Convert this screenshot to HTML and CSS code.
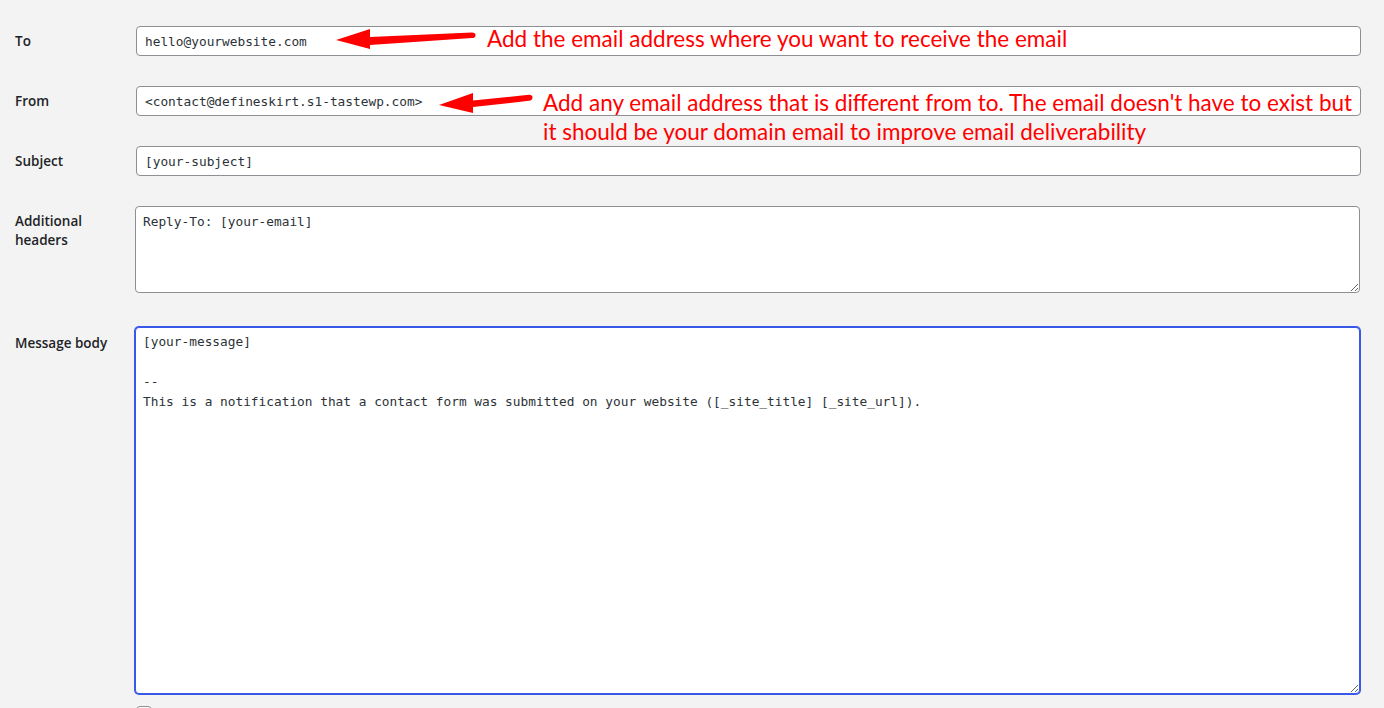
FILE: index.html
```html
<!DOCTYPE html>
<html lang="en">
<head>
    <meta charset="UTF-8">
    <meta name="viewport" content="width=device-width, initial-scale=1.0">
    <title>Mail settings</title>
    <link rel="stylesheet" href="styles.css">
</head>
<body>
    <main class="mail-form">
        <div class="field-row">
            <label class="field-label" for="mail-to">To</label>
            <input type="text" id="mail-to" class="text-field" value="hello@yourwebsite.com">
        </div>
        <div class="field-row">
            <label class="field-label" for="mail-from">From</label>
            <input type="text" id="mail-from" class="text-field" value="<contact@defineskirt.s1-tastewp.com>">
        </div>
        <div class="field-row">
            <label class="field-label" for="mail-subject">Subject</label>
            <input type="text" id="mail-subject" class="text-field" value="[your-subject]">
        </div>
        <div class="field-row">
            <label class="field-label" for="mail-headers">Additional headers</label>
            <textarea id="mail-headers" class="area-field headers-field">Reply-To: [your-email]</textarea>
        </div>
        <div class="field-row message-row">
            <label class="field-label" for="mail-body">Message body</label>
            <textarea id="mail-body" class="area-field body-field">[your-message]

--
This is a notification that a contact form was submitted on your website ([_site_title] [_site_url]).</textarea>
        </div>
        <div class="field-row check-row">
            <span></span>
            <span class="check-box"></span>
        </div>

        <!-- annotations drawn over the form -->
        <svg class="arrow arrow-to" width="140" height="24" viewBox="0 0 140 24">
            <path d="M0 12 L34 1 L34 9 L136 4.5 Q139.5 4.5 139.5 7.2 Q139.5 10 136 10 L34 17 L34 21 Z" fill="#ff0000"/>
        </svg>
        <p class="note note-to">Add the email address where you want to receive the email</p>

        <svg class="arrow arrow-from" width="94" height="24" viewBox="0 0 94 24">
            <path d="M0 13 L34 1 L34 8.5 L90 2.8 Q93.5 2.8 93.5 5.6 Q93.5 8.6 90 8.8 L34 15 L34 21 Z" fill="#ff0000"/>
        </svg>
        <p class="note note-from">Add any email address that is different from to. The email doesn't have to exist but<br>it should be your domain email to improve email deliverability</p>
    </main>
</body>
</html>
```

FILE: styles.css
```css
body {
    margin: 0;
    padding: 0;
    background-color: #f3f3f3;
    font-family: "Open Sans", "Noto Sans", sans-serif;
    color: #1d2327;
}

.mail-form {
    position: relative;
    padding: 26px 23px 0 15px;
}

.field-row {
    display: grid;
    grid-template-columns: 120px 1fr;
    align-items: start;
    margin-bottom: 30px;
}

.field-label {
    font-size: 13.5px;
    font-weight: 600;
    line-height: 19px;
    padding-top: 6px;
    padding-right: 10px;
}

.text-field,
.area-field {
    box-sizing: border-box;
    font-family: "DejaVu Sans Mono", "Liberation Mono", monospace;
    font-size: 12.8px;
    color: #2c3338;
    background: #fff;
    border: 1px solid #8c8f94;
    border-radius: 4px;
    outline: none;
    margin: 0;
}

.text-field {
    width: calc(100% - 1px);
    margin-left: 1px;
    height: 30px;
    padding: 0 8px;
}

.area-field {
    display: block;
    width: calc(100% - 1px);
    line-height: 20px;
    padding: 4px 7px;
}

.headers-field {
    height: 87px;
    padding-top: 5px;
}

.message-row {
    padding-top: 4px;
    margin-bottom: 0;
}

.message-row .field-label {
    padding-top: 7px;
}

.body-field {
    height: 367px;
    border-color: #3858e9;
    box-shadow: 0 0 0 1px #3858e9;
    padding-top: 4px;
}

.check-row {
    margin-top: 12px;
    margin-bottom: 0;
}

.check-box {
    display: block;
    width: 14px;
    height: 14px;
    margin-left: 1px;
    border: 1px solid #8c8f94;
    border-radius: 4px;
    background: #fff;
}

.arrow {
    position: absolute;
    display: block;
}

.arrow-to {
    left: 336px;
    top: 28px;
}

.arrow-from {
    left: 439px;
    top: 92px;
}

.note {
    position: absolute;
    margin: 0;
    font-family: Lato, "Open Sans", sans-serif;
    font-size: 22.5px;
    line-height: 29px;
    color: #ff0000;
    white-space: nowrap;
}

.note-to {
    left: 487px;
    top: 24px;
}

.note-from {
    left: 543px;
    top: 88px;
}
```
